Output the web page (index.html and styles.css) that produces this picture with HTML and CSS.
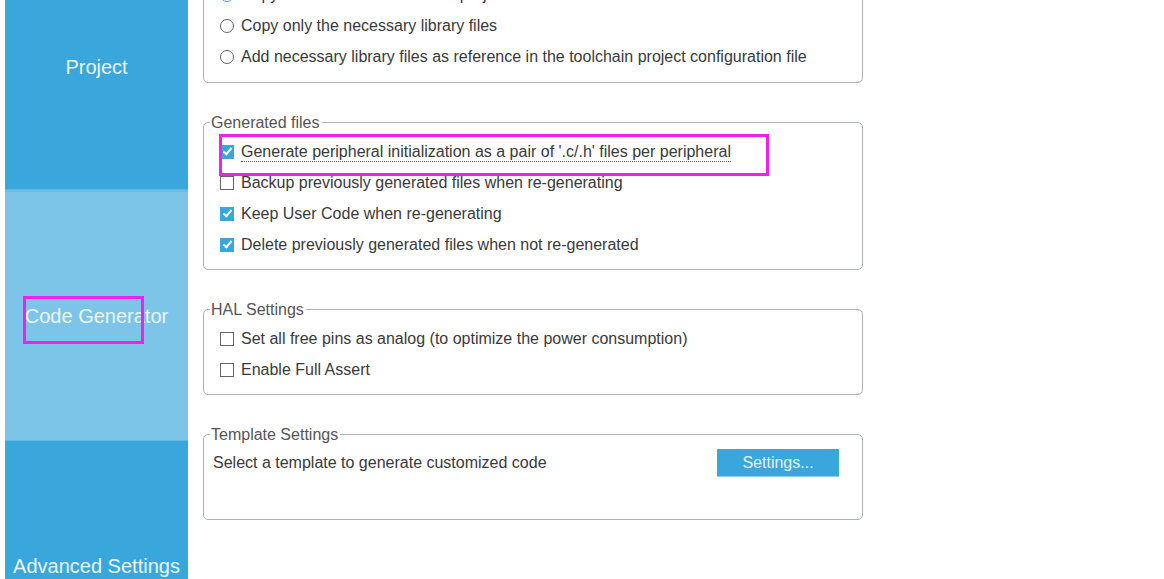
FILE: index.html
```html
<!DOCTYPE html>
<html>
<head>
<meta charset="utf-8">
<link rel="stylesheet" href="styles.css">
</head>
<body>
<div class="app">
  <nav class="sidebar">
    <div class="nav-item first">Project</div>
    <div class="nav-item active"><span class="mark">Code Generator</span></div>
    <div class="nav-item">Advanced Settings</div>
  </nav>
  <main class="content">
    <fieldset class="group lib">
      <legend>STM32Cube MCU packages and embedded software packs</legend>
      <label class="row"><span class="radio checked"></span>Copy all used libraries into the project folder</label>
      <label class="row"><span class="radio"></span>Copy only the necessary library files</label>
      <label class="row"><span class="radio"></span>Add necessary library files as reference in the toolchain project configuration file</label>
    </fieldset>
    <fieldset class="group">
      <legend>Generated files</legend>
      <label class="row highlight"><span class="check checked"></span><span class="dotted">Generate peripheral initialization as a pair of '.c/.h' files per peripheral</span></label>
      <label class="row"><span class="check"></span>Backup previously generated files when re-generating</label>
      <label class="row"><span class="check checked"></span>Keep User Code when re-generating</label>
      <label class="row"><span class="check checked"></span>Delete previously generated files when not re-generated</label>
    </fieldset>
    <fieldset class="group">
      <legend>HAL Settings</legend>
      <label class="row"><span class="check"></span>Set all free pins as analog (to optimize the power consumption)</label>
      <label class="row"><span class="check"></span>Enable Full Assert</label>
    </fieldset>
    <fieldset class="group template">
      <legend>Template Settings</legend>
      <div class="template-row">
        <span>Select a template to generate customized code</span>
        <button class="btn">Settings...</button>
      </div>
    </fieldset>
  </main>
</div>
</body>
</html>
```

FILE: styles.css
```css
*, *::before, *::after { box-sizing: border-box; }
html, body {
  margin: 0;
  padding: 0;
  background: #ffffff;
  overflow: hidden;
  height: 579px;
}
body {
  font-family: "Liberation Sans", Arial, sans-serif;
  color: #3a3a3a;
}
.app {
  display: flex;
  align-items: flex-start;
  height: 579px;
  overflow: hidden;
}
.sidebar {
  width: 183px;
  margin-left: 5px;
  margin-top: -58px;
  display: flex;
  flex-direction: column;
  flex: none;
}
.nav-item {
  height: 251px;
  background: #39a7db;
  color: #eaf6fc;
  font-size: 20px;
  display: flex;
  align-items: center;
  justify-content: center;
  white-space: nowrap;
  border-bottom: 1px solid #5db8e3;
  position: relative;
}
.nav-item.first {
  height: 248px;
  padding-top: 3px;
}
.nav-item.active {
  background: #7cc5e8;
  border-top: 2px solid #6cbde6;
  border-bottom: 1px solid #62b8e2;
}
.mark {
  position: relative;
}
.mark::after {
  content: "";
  position: absolute;
  left: -2px;
  top: -9px;
  width: 121px;
  height: 48px;
  border: 3px solid #f020f0;
}
.content {
  margin-left: 15px;
  margin-top: -43px;
  width: 660px;
  display: flex;
  flex-direction: column;
  gap: 31px;
  flex: none;
}
.group {
  margin: 0;
  border: 1px solid #aeb2b6;
  border-radius: 5px;
  padding: 5px 0 9px 16px;
  min-width: 0;
}
.group.lib {
  padding-bottom: 10px;
}
.group legend {
  font-size: 16px;
  color: #555;
  padding: 0 2px 0 1px;
  margin-left: -10px;
  line-height: 17px;
}
.row {
  display: flex;
  align-items: center;
  height: 31px;
  font-size: 16px;
  color: #3a3a3a;
  white-space: nowrap;
  position: relative;
}
.radio {
  width: 14px;
  height: 14px;
  border: 1px solid #666;
  border-radius: 50%;
  margin-right: 7px;
  flex: none;
  background: #fff;
}
.radio.checked {
  border-color: #39a7db;
  background: radial-gradient(circle, #39a7db 0 4px, #fff 4.5px);
}
.check {
  width: 14px;
  height: 14px;
  border: 1px solid #666;
  margin-right: 7px;
  flex: none;
  background: #fff;
  position: relative;
}
.check.checked {
  background: #39a7db;
  border-color: #39a7db;
}
.check.checked::after {
  content: "";
  position: absolute;
  left: 4px;
  top: 0px;
  width: 5px;
  height: 9px;
  border-right: 2px solid #fff;
  border-bottom: 2px solid #fff;
  transform: rotate(40deg);
}
.dotted {
  border-bottom: 1px dotted #666;
  line-height: 18px;
  padding-top: 1px;
}
.highlight::after {
  content: "";
  position: absolute;
  left: -1px;
  top: -2px;
  width: 550px;
  height: 42px;
  border: 3px solid #f020f0;
}
.template {
  height: 94px;
  padding-top: 6px;
}
.template-row {
  display: flex;
  align-items: center;
  justify-content: space-between;
  width: 626px;
  margin-left: -7px;
  font-size: 16px;
  color: #3a3a3a;
}
.btn {
  width: 122px;
  height: 28px;
  background: #39a7db;
  border: none;
  border-bottom: 1px solid #8fd0ee;
  color: #e6f4fb;
  font-family: "Liberation Sans", Arial, sans-serif;
  font-size: 16px;
  padding: 0;
}
```
